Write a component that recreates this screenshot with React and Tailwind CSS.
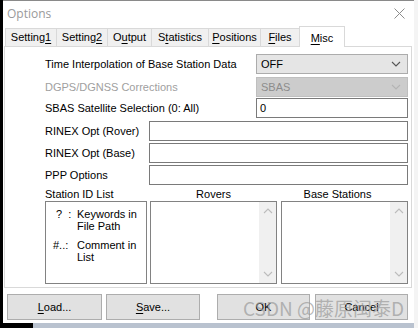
import React from "react";

const Chevron = ({ color = "#555" }) => (
  <svg width="10" height="6" viewBox="0 0 10 6" fill="none">
    <polyline points="1,1 5,5 9,1" stroke={color} strokeWidth="1.1" />
  </svg>
);

const Acc = ({ children }) => <span className="underline underline-offset-2">{children}</span>;

const tabs = [
  { w: "w-[52px]", label: <>Setting<Acc>1</Acc></> },
  { w: "w-[52px]", label: <>Setting<Acc>2</Acc></> },
  { w: "w-[45px]", label: <>O<Acc>u</Acc>tput</> },
  { w: "w-[58px]", label: <>S<Acc>t</Acc>atistics</> },
  { w: "w-[53px]", label: <><Acc>P</Acc>ositions</> },
  { w: "w-[40px]", label: <><Acc>F</Acc>iles</> },
];

// list box with an empty vertical scrollbar
const ListBox = ({ className }) => (
  <div className={`flex border border-[#828282] bg-white ${className}`}>
    <div className="flex-1" />
    <div className="w-[17px] bg-[#f0f0f0] flex flex-col items-center justify-between py-[6px]">
      <div className="rotate-180">
        <Chevron color="#bcbcbc" />
      </div>
      <Chevron color="#bcbcbc" />
    </div>
  </div>
);

const Button = ({ className, children }) => (
  <div className={`h-[26px] flex items-center justify-center bg-[#e1e1e1] border border-[#adadad] ${className}`}>
    {children}
  </div>
);

export default function App() {
  return (
    <div className="w-[418px] h-[328px] flex bg-[#b9c2cf] overflow-hidden font-['Liberation_Sans',sans-serif] text-[11px] text-black relative">
      <div className="w-[3px] h-full bg-black" />
      <div className="w-[411px] flex flex-col">
        {/* dialog */}
        <div className="h-[323px] bg-white border-t border-[#8a8a8a] flex flex-col">
          {/* title bar */}
          <div className="h-[25px] flex items-center justify-between pl-[4px] pr-[9px]">
            <span className="font-['Open_Sans',sans-serif] text-[12px] text-[#9a9a9a]">Options</span>
            <svg width="11" height="11" viewBox="0 0 11 11">
              <path d="M0.5 0.5 L10.5 10.5 M10.5 0.5 L0.5 10.5" stroke="#8c8c8c" strokeWidth="1" />
            </svg>
          </div>

          {/* tabs */}
          <div className="h-[20px] flex items-end pl-[2px] relative z-10">
            {tabs.map((t, i) => (
              <div
                key={i}
                className={`${t.w} h-[18px] flex items-center justify-center bg-[#f0f0f0] border border-[#d9d9d9] border-b-0 ${i > 0 ? "-ml-px" : ""}`}
              >
                {t.label}
              </div>
            ))}
            <div className="w-[46px] h-[21px] -mb-px -ml-px flex items-start pt-[3px] justify-center bg-white border border-[#d9d9d9] border-b-0">
              <Acc>M</Acc>isc
            </div>
          </div>

          {/* tab page */}
          <div className="ml-[1px] w-[408px] h-[242px] border border-[#d9d9d9] pl-[40px] pr-[3px] pt-[7px] flex flex-col">
            <div className="h-[20px] flex items-center">
              <span className="w-[211px]">Time Interpolation of Base Station Data</span>
              <div className="flex-1 h-full flex items-center justify-between pl-[4px] pr-[6px] bg-[#e5e5e5] border border-[#acacac]">
                OFF
                <Chevron />
              </div>
            </div>
            <div className="h-[20px] mt-[3px] flex items-center">
              <span className="w-[211px] text-[#a0a0a0]">DGPS/DGNSS Corrections</span>
              <div className="flex-1 h-full flex items-center justify-between pl-[4px] pr-[6px] bg-[#cccccc] border border-[#bfbfbf] text-[#8c8c8c]">
                SBAS
                <Chevron color="#b4b4b4" />
              </div>
            </div>
            <div className="h-[20px] mt-[1px] flex items-center">
              <span className="w-[211px]">SBAS Satellite Selection (0: All)</span>
              <div className="flex-1 h-full flex items-center pl-[3px] bg-white border border-[#7a7a7a]">0</div>
            </div>
            <div className="h-[20px] mt-[3px] flex items-center">
              <span className="w-[104px]">RINEX Opt (Rover)</span>
              <div className="flex-1 h-full bg-white border border-[#7a7a7a]" />
            </div>
            <div className="h-[20px] mt-[2px] flex items-center">
              <span className="w-[104px]">RINEX Opt (Base)</span>
              <div className="flex-1 h-full bg-white border border-[#7a7a7a]" />
            </div>
            <div className="h-[20px] mt-[2px] flex items-center">
              <span className="w-[104px]">PPP Options</span>
              <div className="flex-1 h-full bg-white border border-[#7a7a7a]" />
            </div>

            <div className="h-[13px] mt-[3px] flex items-center leading-[13px]">
              <span className="w-[105px]">Station ID List</span>
              <span className="w-[127px] text-center">Rovers</span>
              <span className="flex-1 text-center pr-[10px]">Base Stations</span>
            </div>
            <div className="h-[83px] flex gap-[3px]">
              <div className="w-[102px] border border-[#828282] bg-white pl-[7px] pt-[6px] leading-[12px]">
                <div className="flex">
                  <span className="w-[24px]">&nbsp;?&nbsp;&nbsp;:</span>
                  <span>Keywords in<br />File Path</span>
                </div>
                <div className="flex mt-[7px]">
                  <span className="w-[24px]">#..:</span>
                  <span>Comment in<br />List</span>
                </div>
              </div>
              <ListBox className="w-[127px]" />
              <ListBox className="w-[127px] ml-[1px]" />
            </div>
          </div>

          {/* buttons */}
          <div className="mt-[6px] flex pl-[4px]">
            <Button className="w-[95px]"><span><Acc>L</Acc>oad...</span></Button>
            <Button className="w-[94px] ml-[4px]"><span><Acc>S</Acc>ave...</span></Button>
            <Button className="w-[93px] ml-[17px]">OK</Button>
            <Button className="w-[93px] ml-[5px]">Cancel</Button>
          </div>
        </div>
        <div className="h-[5px] flex">
          <div className="w-[30px] bg-black" />
          <div className="flex-1 bg-[#b9c2cf]" />
        </div>
      </div>
      <div className="w-[4px] h-full bg-[#f4f4f4]" />

      {/* CSDN watermark, drawn over the OK / Cancel buttons as in the screenshot */}
      <div className="absolute left-[243px] top-[294px] text-[19px] leading-[28px] text-[#9a9a9a]/70 font-['Noto_Sans_CJK_SC',sans-serif] whitespace-nowrap pointer-events-none">
        CSDN @藤原闽泰D
      </div>
    </div>
  );
}
